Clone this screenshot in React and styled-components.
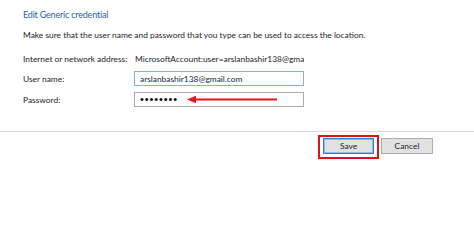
import React from "react";
import styled, { createGlobalStyle } from "styled-components";

const Global = createGlobalStyle`
  html, body { margin: 0; padding: 0; background: #ffffff; }
  body { font-family: Lato, "Open Sans", sans-serif; color: #1e1e1e; }
`;

const Page = styled.div`
  width: 474px;
  height: 250px;
  padding-top: 8px;
  box-sizing: border-box;
  overflow: hidden;
`;

const Title = styled.h1`
  margin: 0 0 0 23px;
  font-size: 9px;
  line-height: 13px;
  letter-spacing: -0.2px;
  font-weight: 400;
  color: #2a5fae;
`;

const Description = styled.p`
  margin: 9px 0 0 23px;
  font-size: 8.4px;
  line-height: 11px;
`;

const Form = styled.div`
  margin: 11px 0 0 23px;
  display: grid;
  grid-template-columns: 111px 170px;
  grid-template-rows: 13px 15px 15px;
  row-gap: 6px;
  font-size: 8.4px;
`;

const Label = styled.div`
  display: flex;
  align-items: center;
  white-space: nowrap;
`;

const Value = styled.div`
  display: flex;
  align-items: center;
  padding-left: 1px;
  white-space: nowrap;
  overflow: hidden;
`;

const Field = styled.div`
  box-sizing: border-box;
  display: flex;
  align-items: center;
  padding-left: 5px;
  border: 1px solid ${(p) => (p.$focused ? "#7fb2e5" : "#acacac")};
  background: #fff;
  white-space: nowrap;
  overflow: hidden;
`;

const Dots = styled.span`
  font-family: "Liberation Sans", Arial, sans-serif;
  font-size: 11px;
  letter-spacing: 0.9px;
  color: #000;
  line-height: 1;
`;

const Arrow = styled.svg`
  margin-left: 9px;
  flex: none;
`;

const Separator = styled.hr`
  margin: 24px 0 0 0;
  border: none;
  border-top: 1px solid #d9d9d9;
  height: 0;
`;

const Actions = styled.div`
  display: flex;
  justify-content: flex-end;
  align-items: flex-start;
  gap: 2px;
  padding: 3px 41px 0 0;
`;

const Highlight = styled.div`
  border: 2px solid #e3101c;
  padding: 1px 3px 3px 3px;
  display: flex;
`;

const Button = styled.button`
  box-sizing: border-box;
  width: ${(p) => p.$w}px;
  height: 16px;
  margin-top: ${(p) => p.$mt || 0}px;
  padding: 0;
  font-family: inherit;
  font-size: 8.4px;
  color: #1e1e1e;
  background: #e1e1e1;
  border: 1px solid ${(p) => (p.$primary ? "#2c7fd0" : "#adadad")};
  box-shadow: ${(p) => (p.$primary ? "inset 0 0 0 1px #8cbbe8" : "none")};
  cursor: pointer;
`;

export default function App() {
  return (
    <Page>
      <Global />
      <Title>Edit Generic credential</Title>
      <Description>
        Make sure that the user name and password that you type can be used to access the location.
      </Description>
      <Form>
        <Label>Internet or network address:</Label>
        <Value>MicrosoftAccount:user=arslanbashir138@gmail.com</Value>
        <Label>User name:</Label>
        <Field $focused>arslanbashir138@gmail.com</Field>
        <Label>Password:</Label>
        <Field>
          <Dots>••••••••</Dots>
          <Arrow width="90" height="9" viewBox="0 0 90 9">
            <polygon points="0,4.5 9,0.8 9,8.2" fill="#e8141c" />
            <rect x="8" y="3.5" width="82" height="2" fill="#e8141c" />
          </Arrow>
        </Field>
      </Form>
      <Separator />
      <Actions>
        <Highlight>
          <Button $w={51} $primary>Save</Button>
        </Highlight>
        <Button $w={52} $mt={3}>Cancel</Button>
      </Actions>
    </Page>
  );
}
